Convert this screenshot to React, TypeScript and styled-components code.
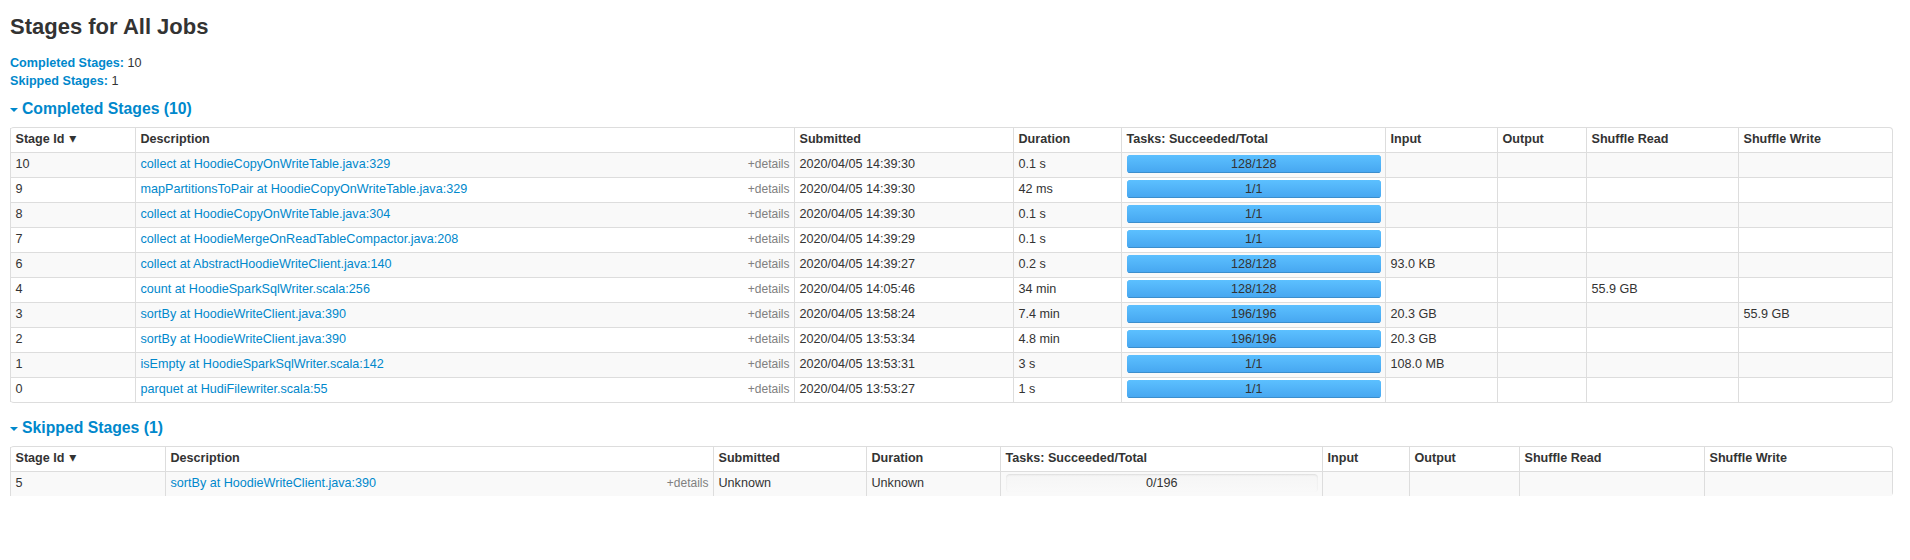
import React from "react";
import styled, { createGlobalStyle } from "styled-components";

const GlobalStyle = createGlobalStyle`
  html, body {
    margin: 0;
    padding: 0;
    background: #ffffff;
  }
  body {
    font-family: "Liberation Sans", Arial, Helvetica, sans-serif;
    font-size: 12.6px;
    line-height: 18px;
    color: #333333;
  }
`;

const LINK = "#0088cc";

const Page = styled.div`
  padding: 9px 17px 0 10px;
  min-height: 560px;
  box-sizing: border-box;
`;

const Title = styled.h3`
  margin: 0 0 9px;
  font-size: 22px;
  line-height: 36px;
  font-weight: bold;
  color: #333333;
`;

const SummaryList = styled.ul`
  list-style: none;
  margin: 0 0 9px;
  padding: 0;
`;

const SummaryItem = styled.li`
  line-height: 18px;
`;

const Link = styled.a`
  color: ${LINK};
  text-decoration: none;
  cursor: pointer;
`;

const SectionHeading = styled.h4`
  margin: 10px 0 9px;
  font-size: 15.75px;
  line-height: 18px;
  font-weight: bold;
  color: ${LINK};
  cursor: pointer;
`;

const ArrowOpen = styled.span`
  display: inline-block;
  width: 0;
  height: 0;
  border-left: 4.5px solid transparent;
  border-right: 4.5px solid transparent;
  border-top: 4.5px solid ${LINK};
  margin: 0 4px 2px 0;
`;

const Table = styled.table<{ $openBottom?: boolean }>`
  width: 100%;
  table-layout: fixed;
  border-collapse: separate;
  border-spacing: 0;
  border: 1px solid #dddddd;
  border-left: 0;
  border-bottom: ${(p) => (p.$openBottom ? "0" : "1px solid #dddddd")};
  border-radius: 4px;
  margin: 0 0 16px;
`;

const HeadCell = styled.th<{ $w?: number }>`
  box-sizing: border-box;
  width: ${(p) => (p.$w ? `${p.$w}px` : "auto")};
  height: 24px;
  border-left: 1px solid #dddddd;
  padding: 2px 4.5px 4px;
  line-height: 18px;
  text-align: left;
  vertical-align: top;
  font-weight: bold;
  color: #333333;
  white-space: nowrap;
  overflow: hidden;
`;

const SortArrow = styled.span`
  font-family: "DejaVu Sans", sans-serif;
  font-size: 14px;
  line-height: 0;
`;

const Row = styled.tr`
  &:nth-child(odd) td {
    background-color: #f9f9f9;
  }
`;

const Cell = styled.td`
  box-sizing: border-box;
  border-left: 1px solid #dddddd;
  border-top: 1px solid #dddddd;
  padding: 2px 4.5px 4px;
  line-height: 18px;
  text-align: left;
  vertical-align: top;
  white-space: nowrap;
  overflow: hidden;
`;

const ProgressCell = styled(Cell)`
  padding: 2px 4px 4px 4.5px;
`;

const DescWrap = styled.div`
  display: flex;
  justify-content: space-between;
  align-items: baseline;
`;

const Details = styled.span`
  font-size: 12px;
  color: grey;
  cursor: pointer;
`;

const Progress = styled.div`
  position: relative;
  height: 18px;
  border-radius: 3.6px;
  overflow: hidden;
  background-color: #f7f7f7;
  background-image: linear-gradient(to bottom, #f5f5f5, #f9f9f9);
  box-shadow: inset 0 1px 2px rgba(0, 0, 0, 0.1);
`;

const Bar = styled.div`
  height: 100%;
  background-color: #4fb4f8;
  background-image: linear-gradient(to bottom, #5cc0ff, #46a6f0);
  box-shadow: inset 0 -1px 0 rgba(0, 0, 0, 0.15);
`;

const ProgressLabel = styled.span`
  position: absolute;
  top: 0;
  left: 0;
  right: 0;
  text-align: center;
  line-height: 18px;
  color: #333333;
`;

type Stage = {
  id: string;
  desc: string;
  submitted: string;
  duration: string;
  done: number;
  total: number;
  input?: string;
  output?: string;
  shuffleRead?: string;
  shuffleWrite?: string;
};

const completed: Stage[] = [
  { id: "10", desc: "collect at HoodieCopyOnWriteTable.java:329", submitted: "2020/04/05 14:39:30", duration: "0.1 s", done: 128, total: 128 },
  { id: "9", desc: "mapPartitionsToPair at HoodieCopyOnWriteTable.java:329", submitted: "2020/04/05 14:39:30", duration: "42 ms", done: 1, total: 1 },
  { id: "8", desc: "collect at HoodieCopyOnWriteTable.java:304", submitted: "2020/04/05 14:39:30", duration: "0.1 s", done: 1, total: 1 },
  { id: "7", desc: "collect at HoodieMergeOnReadTableCompactor.java:208", submitted: "2020/04/05 14:39:29", duration: "0.1 s", done: 1, total: 1 },
  { id: "6", desc: "collect at AbstractHoodieWriteClient.java:140", submitted: "2020/04/05 14:39:27", duration: "0.2 s", done: 128, total: 128, input: "93.0 KB" },
  { id: "4", desc: "count at HoodieSparkSqlWriter.scala:256", submitted: "2020/04/05 14:05:46", duration: "34 min", done: 128, total: 128, shuffleRead: "55.9 GB" },
  { id: "3", desc: "sortBy at HoodieWriteClient.java:390", submitted: "2020/04/05 13:58:24", duration: "7.4 min", done: 196, total: 196, input: "20.3 GB", shuffleWrite: "55.9 GB" },
  { id: "2", desc: "sortBy at HoodieWriteClient.java:390", submitted: "2020/04/05 13:53:34", duration: "4.8 min", done: 196, total: 196, input: "20.3 GB" },
  { id: "1", desc: "isEmpty at HoodieSparkSqlWriter.scala:142", submitted: "2020/04/05 13:53:31", duration: "3 s", done: 1, total: 1, input: "108.0 MB" },
  { id: "0", desc: "parquet at HudiFilewriter.scala:55", submitted: "2020/04/05 13:53:27", duration: "1 s", done: 1, total: 1 },
];

const skipped: Stage[] = [
  { id: "5", desc: "sortBy at HoodieWriteClient.java:390", submitted: "Unknown", duration: "Unknown", done: 0, total: 196 },
];

const headers = [
  "Stage Id",
  "Description",
  "Submitted",
  "Duration",
  "Tasks: Succeeded/Total",
  "Input",
  "Output",
  "Shuffle Read",
  "Shuffle Write",
];

const StageTable: React.FC<{ stages: Stage[]; widths: number[]; openBottom?: boolean }> = ({
  stages,
  widths,
  openBottom,
}) => (
  <Table $openBottom={openBottom}>
    <thead>
      <tr>
        {headers.map((h, i) => (
          <HeadCell key={h} $w={widths[i]}>
            {h}
            {i === 0 && <SortArrow>&nbsp;▾</SortArrow>}
          </HeadCell>
        ))}
      </tr>
    </thead>
    <tbody>
      {stages.map((s) => (
        <Row key={s.id}>
          <Cell>{s.id}</Cell>
          <Cell>
            <DescWrap>
              <Link>{s.desc}</Link>
              <Details>+details</Details>
            </DescWrap>
          </Cell>
          <Cell>{s.submitted}</Cell>
          <Cell>{s.duration}</Cell>
          <ProgressCell>
            <Progress>
              <Bar style={{ width: `${(s.done / s.total) * 100}%` }} />
              <ProgressLabel>
                {s.done}/{s.total}
              </ProgressLabel>
            </Progress>
          </ProgressCell>
          <Cell>{s.input ?? ""}</Cell>
          <Cell>{s.output ?? ""}</Cell>
          <Cell>{s.shuffleRead ?? ""}</Cell>
          <Cell>{s.shuffleWrite ?? ""}</Cell>
        </Row>
      ))}
    </tbody>
  </Table>
);

export default function App() {
  return (
    <>
      <GlobalStyle />
      <Page>
        <Title>Stages for All Jobs</Title>
        <SummaryList>
          <SummaryItem>
            <Link>
              <strong>Completed Stages:</strong>
            </Link>{" "}
            10
          </SummaryItem>
          <SummaryItem>
            <Link>
              <strong>Skipped Stages:</strong>
            </Link>{" "}
            1
          </SummaryItem>
        </SummaryList>
        <SectionHeading>
          <ArrowOpen />
          <Link>Completed Stages (10)</Link>
        </SectionHeading>
        <StageTable stages={completed} widths={[125, 659, 219, 108, 264, 112, 89, 152]} />
        <SectionHeading>
          <ArrowOpen />
          <Link>Skipped Stages (1)</Link>
        </SectionHeading>
        <StageTable stages={skipped} widths={[155, 548, 153, 134, 322, 87, 110, 185]} openBottom />
      </Page>
    </>
  );
}
